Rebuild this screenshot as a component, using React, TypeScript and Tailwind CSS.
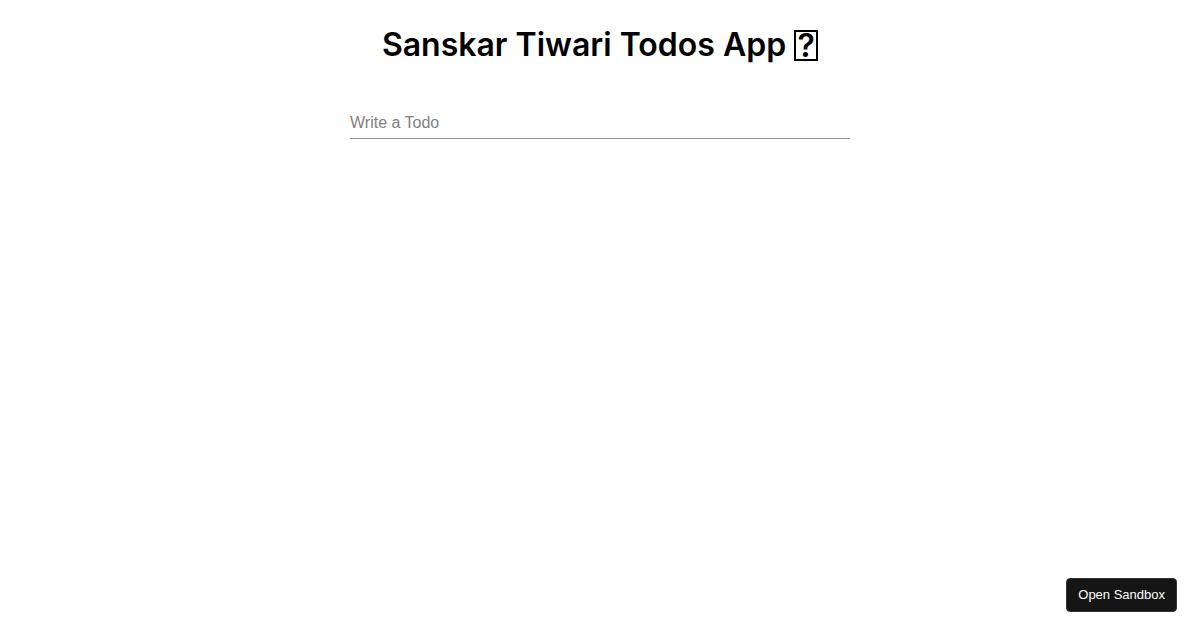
import { useState } from "react"
import type { FormEvent } from "react"

export default function App() {
  const [input, setInput] = useState("")
  const [todos, setTodos] = useState<string[]>([])

  const addTodo = (e: FormEvent) => {
    e.preventDefault()
    if (!input.trim()) return
    setTodos([...todos, input])
    setInput("")
  }

  return (
    <div className="flex min-h-screen flex-col bg-white font-['Liberation_Sans',sans-serif] text-black">
      <main className="flex flex-1 flex-col items-center px-4 pt-[21px]">
        <h1 className="flex items-center gap-2 font-['Inter',sans-serif] text-[32px] leading-12 font-semibold">
          Sanskar Tiwari Todos App
          <span className="flex h-[31px] w-6 items-center justify-center border-2 border-black pt-0.5 leading-none">
            ?
          </span>
        </h1>

        <form onSubmit={addTodo} className="mt-[35px] w-full max-w-[500px]">
          <input
            type="text"
            aria-label="Write a Todo"
            placeholder="Write a Todo"
            value={input}
            onChange={(e) => setInput(e.target.value)}
            className="block h-[35px] w-full border-b border-[#949494] pt-1 text-base outline-none placeholder:text-[#808080]"
          />
        </form>

        <ul className="w-full max-w-[500px]">
          {todos.map((todo, i) => (
            <li key={i} className="py-2">
              {todo}
            </li>
          ))}
        </ul>
      </main>

      <footer className="flex justify-end pr-[23px] pb-[18px]">
        <button
          type="button"
          className="h-[34px] rounded border border-[#343434] bg-[#151515] px-[11px] text-[13px] text-white"
        >
          Open Sandbox
        </button>
      </footer>
    </div>
  )
}
